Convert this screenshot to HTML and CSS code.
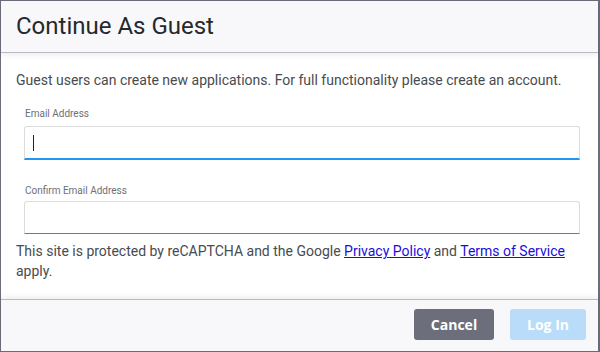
FILE: index.html
```html
<!DOCTYPE html>
<html lang="en">
<head>
    <meta charset="UTF-8">
    <meta name="viewport" content="width=device-width, initial-scale=1.0">
    <title>Continue As Guest</title>
    <link rel="stylesheet" href="styles.css">
</head>
<body>
    <div class="modal">
        <div class="modal-header">
            <h1>Continue As Guest</h1>
        </div>

        <div class="modal-body">
            <p class="intro">Guest users can create new applications. For full functionality please create an account.</p>

            <div class="field">
                <label class="field-label">Email Address</label>
                <div class="field-input active"><span class="caret"></span></div>
            </div>

            <div class="field">
                <label class="field-label">Confirm Email Address</label>
                <div class="field-input"></div>
            </div>

            <p class="recaptcha">This site is protected by reCAPTCHA and the Google <a href="#">Privacy Policy</a> and <a href="#">Terms of Service</a> apply.</p>
        </div>

        <div class="modal-footer">
            <button class="btn btn-cancel">Cancel</button>
            <button class="btn btn-login">Log In</button>
        </div>
    </div>
</body>
</html>
```

FILE: styles.css
```css
html, body {
    margin: 0;
    padding: 0;
}
body {
    font-family: Roboto, "Liberation Sans", sans-serif;
    background: #fff;
}
.modal {
    width: 600px;
    height: 352px;
    box-sizing: border-box;
    border: 1px solid #6b6e78;
    border-right-width: 2px;
    display: flex;
    flex-direction: column;
    background: #fff;
}
.modal-header {
    height: 52px;
    box-sizing: border-box;
    background: #f8f8fb;
    border-bottom: 1px solid #b9bac4;
    box-shadow: 0 2px 6px rgba(0,0,0,0.08);
    padding: 0 15px;
    display: flex;
    align-items: center;
    position: relative;
}
.modal-header h1 {
    margin: 0;
    font-size: 24px;
    font-weight: 400;
    color: #25282d;
    padding-bottom: 2px;
}
.modal-body {
    flex: 1;
    padding: 17px 15px 0 15px;
}
.intro {
    margin: 0 0 18px;
    font-size: 14px;
    line-height: 20px;
    color: #484b50;
}
.field {
    margin: 0 3px 0 8px;
}
.field-label {
    display: block;
    font-size: 10px;
    color: #6d7075;
    line-height: 12px;
    margin: 0 0 6px 1px;
}
.field-input {
    height: 34px;
    box-sizing: border-box;
    border: 1px solid #dcdcdc;
    border-bottom: 1px solid #76787c;
    border-radius: 3px 3px 0 0;
    margin-bottom: 25px;
    display: flex;
    align-items: center;
    padding-left: 8px;
}
.field-input.active {
    border-bottom: 2px solid #2196f3;
}
.field:last-of-type .field-label {
    margin-bottom: 4px;
}
.field:last-of-type .field-input {
    height: 33px;
    margin-bottom: 7px;
}
.caret {
    width: 1px;
    height: 16px;
    background: #222;
}
.recaptcha {
    margin: 0;
    font-size: 14px;
    line-height: 20px;
    color: #484b50;
}
.recaptcha a {
    color: #1a0dde;
}
.modal-footer {
    height: 52px;
    box-sizing: border-box;
    background: #f8f8fb;
    border-top: 1px solid #b9bac4;
    box-shadow: 0 -2px 6px rgba(0,0,0,0.07);
    display: flex;
    justify-content: flex-end;
    align-items: center;
    gap: 16px;
    padding: 0 12px 2px 0;
}
.btn {
    font-family: "Open Sans", sans-serif;
    font-weight: 700;
    font-size: 14px;
    color: #fff;
    border: none;
    border-radius: 3px;
    height: 31px;
    cursor: pointer;
}
.btn-cancel {
    background: #6c6f7b;
    width: 80px;
}
.btn-login {
    background: #b8dcfa;
    width: 76px;
}
```
